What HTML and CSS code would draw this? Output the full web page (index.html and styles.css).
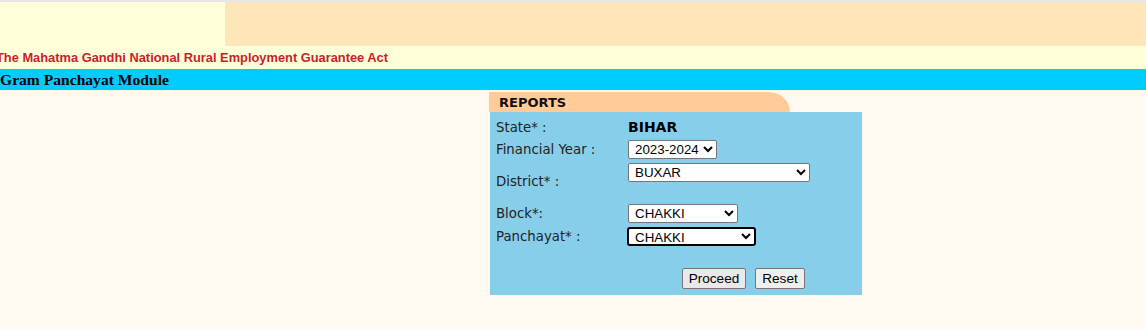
FILE: index.html
```html
<!DOCTYPE html>
<html>
<head>
<meta charset="utf-8">
<link rel="stylesheet" href="styles.css">
</head>
<body>
<div class="topline"></div>
<div class="banner">
  <div class="banner-left"></div>
  <div class="banner-right"></div>
</div>
<div class="act">The Mahatma Gandhi National Rural Employment Guarantee Act</div>
<div class="module">Gram Panchayat Module</div>
<div class="main">
  <div class="reports">
    <div class="tab">REPORTS</div>
    <div class="panel">
      <div class="row r-state"><span class="lbl">State* :</span><span class="val bold">BIHAR</span></div>
      <div class="row r-fy"><span class="lbl">Financial Year :</span><span class="val"><select class="sel sel-fy"><option>2023-2024</option></select></span></div>
      <div class="row r-dist"><span class="lbl lbl-low">District* :</span><span class="val"><select class="sel sel-dist"><option>BUXAR</option></select></span></div>
      <div class="row r-block"><span class="lbl">Block*:</span><span class="val"><select class="sel sel-block"><option>CHAKKI</option></select></span></div>
      <div class="row r-pan"><span class="lbl">Panchayat* :</span><span class="val"><select class="sel sel-pan focus"><option>CHAKKI</option></select></span></div>
      <div class="buttons"><button class="btn btn-proceed">Proceed</button><button class="btn btn-reset">Reset</button></div>
    </div>
  </div>
</div>
</body>
</html>
```
FILE: styles.css
```css
html, body { margin: 0; padding: 0; }
body {
  background: #fff9ef;
  width: 1146px;
  height: 330px;
  overflow: hidden;
  font-family: "DejaVu Sans", Verdana, sans-serif;
}
.topline { height: 2px; background: #e6e6e6; }
.banner { display: flex; height: 44px; }
.banner-left { width: 225px; background: #ffffd9; }
.banner-right { flex: 1; background: #ffe6b8; }
.act {
  background: #ffffd9;
  height: 23px;
  line-height: 23px;
  color: #c81e2b;
  font-family: "Liberation Sans", Arial, sans-serif;
  font-weight: bold;
  font-size: 12.85px;
  text-indent: -4px;
  white-space: nowrap;
}
.module {
  background: #00ccff;
  height: 21px;
  line-height: 21px;
  font-family: "Liberation Serif", "Times New Roman", serif;
  font-weight: bold;
  font-size: 15.6px;
  color: #000;
}
.main { display: flex; padding-left: 489px; padding-top: 2px; }
.reports { width: 373px; }
.tab {
  width: 291px;
  height: 20px;
  line-height: 21px;
  background: #ffcc99;
  border-top-right-radius: 22px 20px;
  font-weight: bold;
  font-size: 13px;
  padding-left: 10px;
  color: #111;
}
.panel {
  background: #87ceeb;
  margin-left: 1px;
  width: 372px;
  height: 183px;
  box-sizing: border-box;
  padding: 6px 0 0 6px;
  font-size: 13.3px;
  color: #222;
}
.row { display: flex; align-items: center; }
.lbl { width: 132px; }
.val { display: flex; }
.bold { font-weight: bold; color: #000; font-size: 14px; }
.r-state { height: 18px; }
.r-fy { height: 19px; margin-top: 4px; }
.r-dist { height: 36px; margin-top: 4px; align-items: flex-start; }
.lbl-low { margin-top: 11px; }
.r-block { height: 19px; margin-top: 5px; }
.r-pan { height: 19px; margin-top: 4px; }
.sel {
  font-family: "Liberation Sans", Arial, sans-serif;
  font-size: 13.33px;
  height: 19px;
  padding: 0 0 0 2px;
  border: 1px solid #767676;
  border-radius: 2px;
  background: #fff;
  color: #000;
  margin: 0;
}
.sel-fy { width: 89px; }
.sel-dist { width: 182px; }
.sel-block { width: 110px; }
.sel-pan { width: 129px; margin-left: -1px; }
.focus { outline: none; border: 2px solid #000; border-radius: 3px; padding-left: 2px; }
.buttons { display: flex; gap: 9px; padding-left: 186px; margin-top: 22px; }
.btn {
  font-family: "Liberation Sans", Arial, sans-serif;
  font-size: 13.6px;
  height: 21px;
  padding: 0 6px;
  background: #efefef;
  border: 1px solid #767676;
  border-radius: 2px;
  color: #000;
  margin: 0;
}
.btn-proceed { background: #e9e9e9; width: 64px; padding: 0; }
.btn-reset { width: 50px; padding: 0; }
```
